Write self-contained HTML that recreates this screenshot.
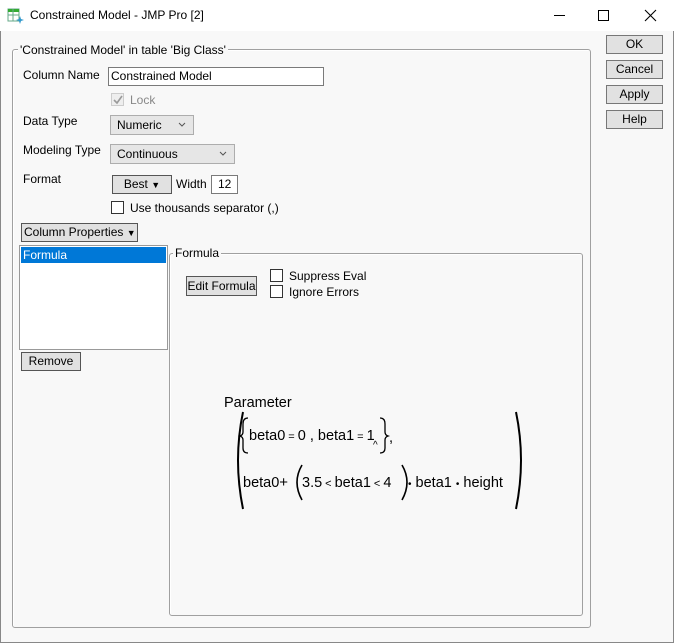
<!DOCTYPE html>
<html><head><meta charset="utf-8"><style>
*{margin:0;padding:0;box-sizing:border-box}
body{width:674px;height:643px;position:relative;background:#f8f8f8;font-family:"Liberation Sans",sans-serif;font-size:12px;color:#000;overflow:hidden}
.a{position:absolute;white-space:nowrap}
.btn{position:absolute;background:#e1e1e1;border:1px solid #adadad;text-align:center;line-height:16px}
.dd{position:absolute;background:#e6e6e6;border:1px solid #adadad;line-height:18px;padding-left:6px}
.cb{position:absolute;width:13px;height:13px;border:1px solid #333;background:#fff}
.inp{position:absolute;background:#fff;border:1px solid #7a7a7a;line-height:16px;padding-left:2px}
.grp{position:absolute;border:1px solid #a0a0a0;border-radius:3px;box-shadow:1px 1px 0 #fff inset}
.lbl{position:absolute;background:#f8f8f8;padding:0 2px;line-height:14px}
.f{position:absolute;font-size:14.5px;white-space:nowrap;line-height:16px}
.op{font-size:11px;padding:0 3px}
</style></head><body>
<div class="a" style="left:0;top:0;width:674px;height:31px;background:#fff"></div>
<svg class="a" style="left:7px;top:7px" width="18" height="18"><rect x="1" y="2" width="11" height="12" fill="#fff" stroke="#6a8" /><rect x="1" y="2" width="11" height="3" fill="#3a3"/><line x1="1" y1="8" x2="12" y2="8" stroke="#6a8"/><line x1="6" y1="2" x2="6" y2="14" stroke="#6a8"/><path d="M13 9l1 3 3 1-3 1-1 3-1-3-3-1 3-1z" fill="#39c"/></svg>
<div class="a" style="left:30px;top:8px;font-size:12px">Constrained Model - JMP Pro [2]</div>
<div class="a" style="left:554px;top:15px;width:11px;height:1px;background:#000"></div>
<div class="a" style="left:598px;top:10px;width:11px;height:11px;border:1px solid #000"></div>
<svg class="a" style="left:644px;top:9px" width="13" height="13"><path d="M1 1L12 12M12 1L1 12" stroke="#000" stroke-width="1.1"/></svg>
<div class="a" style="left:0;top:31px;width:1px;height:612px;background:#888"></div>
<div class="a" style="left:673px;top:31px;width:1px;height:612px;background:#888"></div>
<div class="a" style="left:0;top:642px;width:674px;height:1px;background:#888"></div>

<div class="grp" style="left:12px;top:49px;width:579px;height:579px"></div>
<div class="lbl" style="left:18px;top:43px">'Constrained Model' in table 'Big Class'</div>

<div class="a" style="left:23px;top:68px">Column Name</div>
<div class="inp" style="left:108px;top:67px;width:216px;height:19px">Constrained Model</div>
<div class="a" style="left:111px;top:93px;width:13px;height:13px;border:1px solid #ccc;background:#eee"></div>
<svg class="a" style="left:112px;top:94px" width="12" height="12"><path d="M2 6l3 3 5-7" stroke="#999" stroke-width="1.6" fill="none"/></svg>
<div class="a" style="left:130px;top:93px;color:#888">Lock</div>

<div class="a" style="left:23px;top:114px">Data Type</div>
<div class="dd" style="left:110px;top:115px;width:84px;height:20px">Numeric</div>
<svg class="a" style="left:178px;top:122px" width="8" height="6"><path d="M1 1l3 3 3-3" stroke="#555" fill="none"/></svg>
<div class="a" style="left:23px;top:143px">Modeling Type</div>
<div class="dd" style="left:110px;top:144px;width:125px;height:20px">Continuous</div>
<svg class="a" style="left:219px;top:151px" width="8" height="6"><path d="M1 1l3 3 3-3" stroke="#555" fill="none"/></svg>

<div class="a" style="left:23px;top:172px">Format</div>
<div class="btn" style="left:112px;top:175px;width:60px;height:19px;border-color:#555;line-height:17px">Best <span style="font-size:9px">&#9660;</span></div>
<div class="a" style="left:176px;top:177px">Width</div>
<div class="inp" style="left:211px;top:175px;width:27px;height:19px;padding-left:6px">12</div>
<div class="cb" style="left:111px;top:201px"></div>
<div class="a" style="left:130px;top:201px">Use thousands separator (,)</div>

<div class="btn" style="left:21px;top:223px;width:117px;height:19px;border-color:#555;text-align:left;padding-left:2px">Column Properties <span style="font-size:9px">&#9660;</span></div>
<div class="a" style="left:19px;top:245px;width:149px;height:105px;background:#fff;border:1px solid #999"></div>
<div class="a" style="left:21px;top:247px;width:145px;height:16px;background:#0078d7;color:#fff;padding-left:2px;line-height:16px">Formula</div>
<div class="btn" style="left:21px;top:352px;width:60px;height:19px;border-color:#555">Remove</div>

<div class="grp" style="left:169px;top:253px;width:414px;height:363px"></div>
<div class="lbl" style="left:173px;top:246px">Formula</div>
<div class="btn" style="left:186px;top:276px;width:71px;height:20px;border-color:#555;line-height:18px">Edit Formula</div>
<div class="cb" style="left:270px;top:269px"></div>
<div class="a" style="left:289px;top:269px">Suppress Eval</div>
<div class="cb" style="left:270px;top:285px"></div>
<div class="a" style="left:289px;top:285px">Ignore Errors</div>

<div class="f" style="left:224px;top:395px;font-size:14.5px">Parameter</div>
<svg class="a" style="left:230px;top:410px" width="300" height="102">
<path d="M13 2Q3 50 13 99" stroke="#000" stroke-width="2" fill="none"/>
<path d="M286 2Q296 50 286 99" stroke="#000" stroke-width="2" fill="none"/>
<path d="M18 8Q13 8 13 14L13 22Q13 25 10 26Q13 27 13 30L13 38Q13 43 18 43" stroke="#000" stroke-width="1.3" fill="none"/>
<path d="M150 8Q155 8 155 14L155 22Q155 25 158 26Q155 27 155 30L155 38Q155 43 150 43" stroke="#000" stroke-width="1.3" fill="none"/>
<path d="M72 55Q62 72 72 90" stroke="#000" stroke-width="1.6" fill="none"/>
<path d="M172 55Q182 72 172 90" stroke="#000" stroke-width="1.6" fill="none"/>
</svg>
<div class="f" style="left:249px;top:428px">beta0<span class="op">=</span>0 , beta1<span class="op">=</span>1</div>
<div class="a" style="left:373px;top:440px;font-size:10px">^</div>
<div class="f" style="left:389px;top:430px">,</div>
<div class="f" style="left:243px;top:475px">beta0<span style="font-size:15px">+</span></div>
<div class="f" style="left:302px;top:475px">3.5<span class="op">&lt;</span>beta1<span class="op">&lt;</span>4</div>
<div class="f" style="left:408px;top:475px"><span style="font-size:10px">&#8226;</span> beta1 <span style="font-size:10px">&#8226;</span> height</div>

<div class="btn" style="left:606px;top:35px;width:57px;height:19px;border-color:#777">OK</div>
<div class="btn" style="left:606px;top:60px;width:57px;height:19px;border-color:#777">Cancel</div>
<div class="btn" style="left:606px;top:85px;width:57px;height:19px;border-color:#777">Apply</div>
<div class="btn" style="left:606px;top:110px;width:57px;height:19px;border-color:#777">Help</div>
</body></html>
